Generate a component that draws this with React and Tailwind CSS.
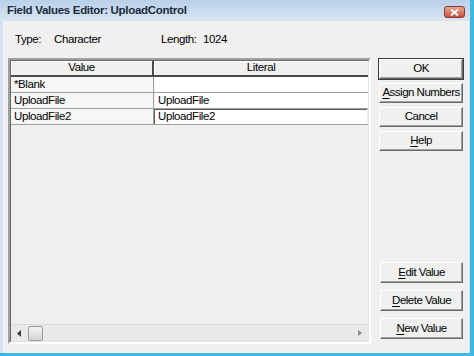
import React from "react";

const rows = [
    { value: "*Blank", literal: "" },
    { value: "UploadFile", literal: "UploadFile" },
    { value: "UploadFile2", literal: "UploadFile2", editing: true },
];

function Mnemonic({ text, at }) {
    if (at < 0) return <span>{text}</span>;
    return (
        <span>
            {text.slice(0, at)}
            <span className="underline underline-offset-[2px]">{text[at]}</span>
            {text.slice(at + 1)}
        </span>
    );
}

function Btn({ label, at = -1, isDefault = false, tall = false }) {
    const outer = isDefault ? "border border-[#3c3c3c]" : "border border-transparent";
    return (
        <div className={`${tall ? "h-[23px]" : "h-[22px]"} ${outer}`}>
            <div className="h-full flex items-center justify-center bg-[#f0f0f0] border border-t-white border-l-white border-r-[#696969] border-b-[#696969] shadow-[inset_-1px_-1px_0_#a0a0a0] text-[11.5px] tracking-[-0.5px] text-black">
                <Mnemonic text={label} at={at} />
            </div>
        </div>
    );
}

export default function App() {
    return (
        <div className="w-[474px] h-[356px] bg-[#3fb8e1] overflow-hidden font-['Liberation_Sans',Arial,sans-serif]">
            <div className="w-[470px] h-[353px] flex flex-col bg-[#d4e3f3] pl-[3px] pr-[1px]">
                {/* title bar */}
                <div className="h-[21px] -ml-[3px] -mr-[1px] flex items-center justify-between pl-[7px] pr-[5px] bg-linear-to-b from-[#b9d0e9] to-[#d9e6f4]">
                    <div className="text-[11.5px] font-bold tracking-[-0.3px] text-[#1c2a3a]">Field Values Editor: UploadControl</div>
                    <div className="w-[21px] h-[12px] mt-[3px] rounded-[3px] border border-[#8a3a30] bg-linear-to-b from-[#e9a593] to-[#c8503f] flex items-center justify-center">
                        <svg width="9" height="7" viewBox="0 0 9 7">
                            <path d="M1 0.5 L8 6.5 M8 0.5 L1 6.5" stroke="#fff" strokeWidth="1.8" />
                        </svg>
                    </div>
                </div>

                {/* body */}
                <div className="flex-1 flex flex-col bg-[#f0f0f0] px-[5px] pb-[9px] text-[11.5px] tracking-[-0.4px] text-black">
                    <div className="h-[37px] flex items-center pl-[7px] pt-[1px]">
                        <span className="w-[39px]">Type:</span>
                        <span className="w-[107px]">Character</span>
                        <span className="w-[42px]">Length:</span>
                        <span>1024</span>
                    </div>

                    <div className="flex-1 flex gap-[7px]">
                        {/* grid */}
                        <div className="w-[364px] flex flex-col border-2 border-t-[#a0a0a0] border-l-[#a0a0a0] border-r-white border-b-white shadow-[inset_1px_1px_0_#696969,inset_-1px_-1px_0_#e3e3e3] p-[1px]">
                            <div className="flex h-[16px] border-b-2 border-[#4a4a4a]">
                                <div className="w-[143px] flex items-center justify-center border-r-2 border-[#4a4a4a] bg-[#f0f0f0] shadow-[inset_1px_1px_0_#fff]">Value</div>
                                <div className="flex-1 flex items-center justify-center bg-[#f0f0f0] shadow-[inset_1px_1px_0_#fff]">Literal</div>
                            </div>
                            {rows.map((r) => (
                                <div key={r.value} className="flex h-[16px] border-b border-[#a0a0a0]">
                                    <div className="w-[143px] flex items-center pl-[3px] bg-[#f6f6f6] border-r border-[#a0a0a0]">{r.value}</div>
                                    <div className={`flex-1 flex items-center pl-[3px] bg-white ${r.editing ? "border-l border-t border-[#5a5a5a] mr-[1px]" : "ml-[1px]"}`}>{r.literal}</div>
                                </div>
                            ))}
                            <div className="flex-1 bg-[#efefef]" />
                            {/* horizontal scrollbar */}
                            <div className="h-[17px] flex items-center bg-[#e9e9e9] border-t border-[#dcdcdc]">
                                <div className="w-[17px] flex items-center justify-center">
                                    <svg width="5" height="7" viewBox="0 0 5 7">
                                        <path d="M4 0 L0 3.5 L4 7 Z" fill="#3a3a3a" />
                                    </svg>
                                </div>
                                <div className="w-[15px] h-[15px] rounded-[2px] border border-[#9a9a9a] bg-linear-to-b from-[#f2f2f2] to-[#d6d6d6]" />
                                <div className="flex-1" />
                                <div className="w-[17px] flex items-center justify-center">
                                    <svg width="4" height="6" viewBox="0 0 4 6">
                                        <path d="M0 0 L4 3 L0 6 Z" fill="#8a8a8a" />
                                    </svg>
                                </div>
                            </div>
                        </div>

                        {/* buttons */}
                        <div className="w-[86px] flex flex-col justify-between">
                            <div className="flex flex-col gap-[2px]">
                                <Btn label="OK" isDefault />
                                <Btn label="Assign Numbers" at={0} />
                                <Btn label="Cancel" />
                                <Btn label="Help" at={0} />
                            </div>
                            <div className="flex flex-col gap-[5px] pl-[1px] pb-[4px]">
                                <Btn label="Edit Value" at={0} tall />
                                <Btn label="Delete Value" at={0} tall />
                                <Btn label="New Value" at={0} tall />
                            </div>
                        </div>
                    </div>
                </div>
            </div>
        </div>
    );
}
